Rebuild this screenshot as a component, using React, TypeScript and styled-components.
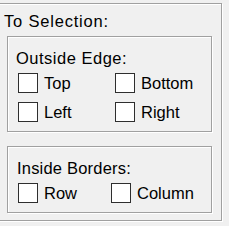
import styled, { createGlobalStyle } from "styled-components";

const GlobalStyle = createGlobalStyle`
  html, body {
    margin: 0;
    padding: 0;
    background: #f0f0f0;
    overflow: hidden;
  }
  body {
    font-family: "Liberation Sans", Arial, sans-serif;
    font-size: 16.5px;
    color: #000;
  }
`;

const Page = styled.div`
  width: 229px;
  height: 226px;
  padding-top: 3px;
  box-sizing: border-box;
`;

const Etched = styled.div`
  border: 1px solid #a0a0a0;
  box-shadow: inset 1px 1px 0 #fff, 1px 1px 0 #fff;
  box-sizing: border-box;
`;

const OuterPanel = styled(Etched)`
  margin-left: -4px;
  width: 226px;
  height: 218px;
  padding: 8px 9px 0 10px;
`;

const Caption = styled.div<{ $indent?: number; $spacing?: number }>`
  line-height: 19px;
  height: 19px;
  white-space: nowrap;
  margin-left: ${({ $indent }) => $indent ?? 0}px;
  letter-spacing: ${({ $spacing }) => $spacing ?? 0.4}px;
`;

const SubPanel = styled(Etched)<{ $gap?: number }>`
  width: 205px;
  margin-top: ${({ $gap }) => $gap ?? 0}px;
  padding: 12px 8px 9px 10px;
`;

const Grid = styled.div<{ $col: number }>`
  display: grid;
  grid-template-columns: ${({ $col }) => $col}px auto;
  row-gap: 9px;
  margin-top: 5px;
`;

const Option = styled.label`
  display: flex;
  align-items: center;
  gap: 6px;
  height: 20px;
  line-height: 19px;
  white-space: nowrap;
`;

const Box = styled.span`
  width: 20px;
  height: 20px;
  box-sizing: border-box;
  border: 1.5px solid #2e2e2e;
  background: #fff;
  flex-shrink: 0;
`;

function Check({ label }: { label: string }) {
  return (
    <Option>
      <Box />
      {label}
    </Option>
  );
}

export default function App() {
  return (
    <Page>
      <GlobalStyle />
      <OuterPanel>
        <Caption $indent={-3} $spacing={0.8}>To Selection:</Caption>
        <SubPanel $gap={5}>
          <Caption $indent={-2} $spacing={0.5}>Outside Edge:</Caption>
          <Grid $col={97}>
            <Check label="Top" />
            <Check label="Bottom" />
            <Check label="Left" />
            <Check label="Right" />
          </Grid>
        </SubPanel>
        <SubPanel $gap={14}>
          <Caption $indent={-1} $spacing={0.2}>Inside Borders:</Caption>
          <Grid $col={93}>
            <Check label="Row" />
            <Check label="Column" />
          </Grid>
        </SubPanel>
      </OuterPanel>
    </Page>
  );
}
